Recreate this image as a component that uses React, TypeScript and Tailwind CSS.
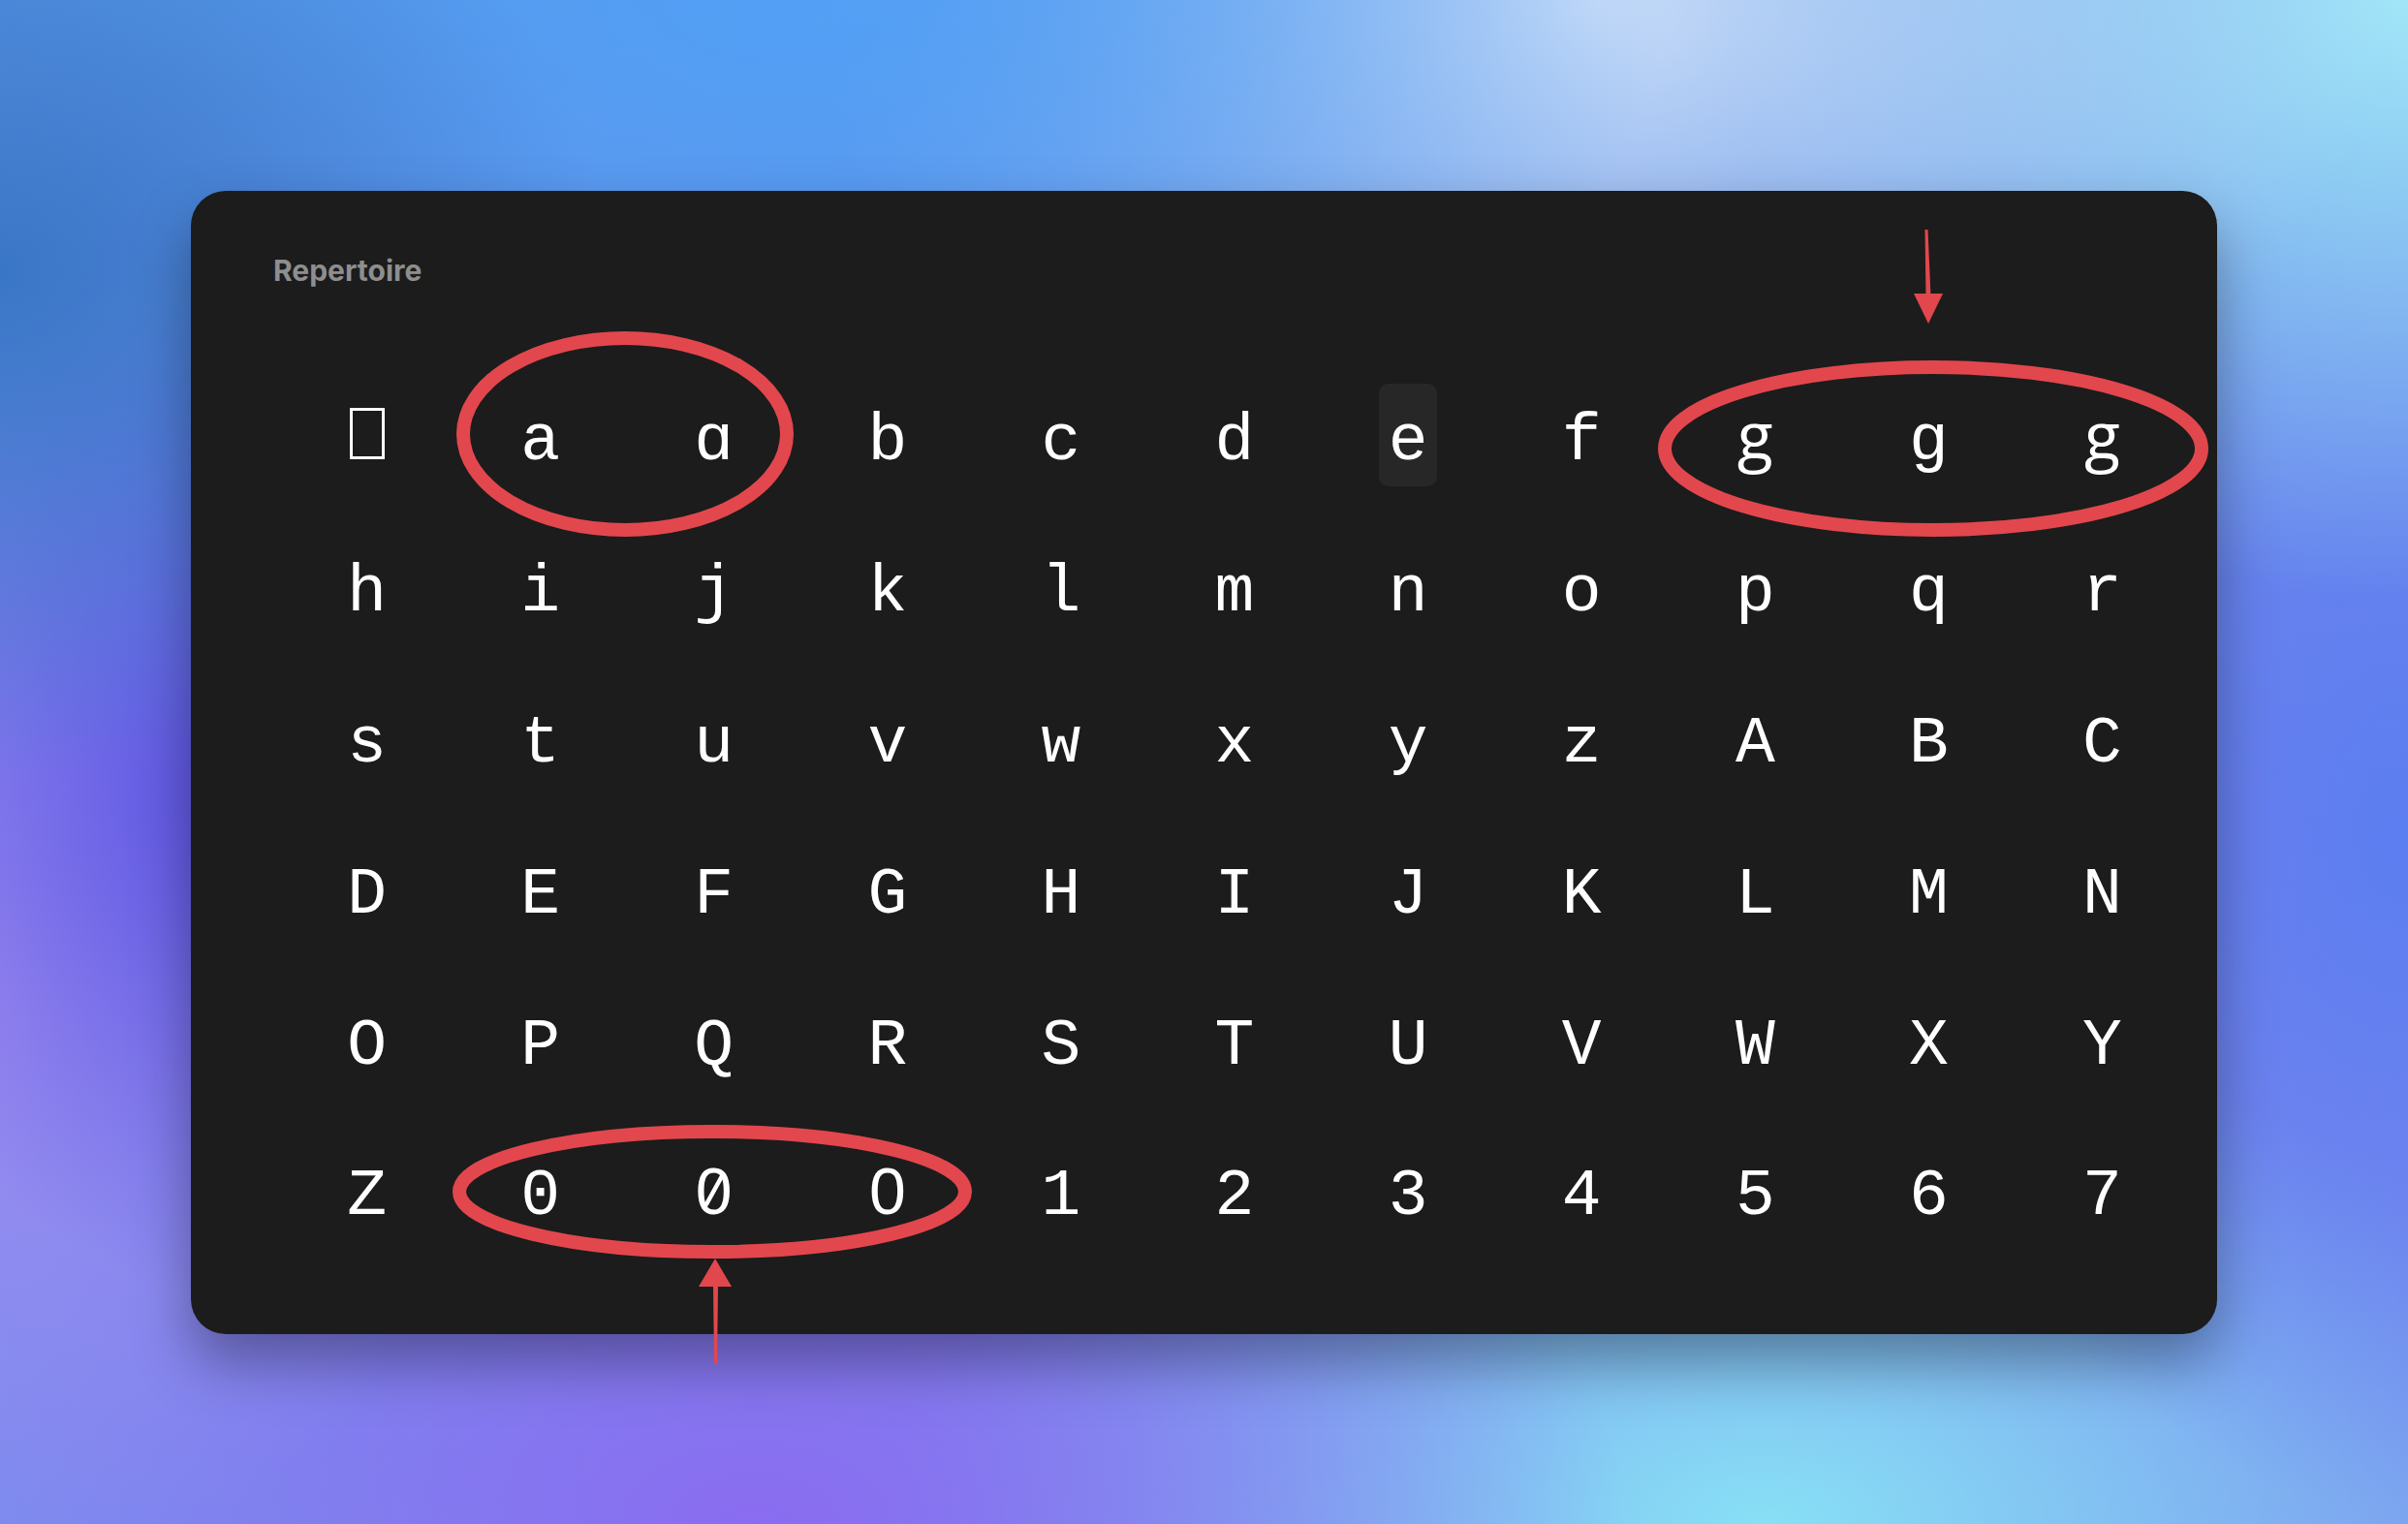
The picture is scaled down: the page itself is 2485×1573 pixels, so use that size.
import React from "react";

type Glyph = { ch: string; kind?: "tofu" | "sans" | "hl" | "slash" | "plain" };

const rows: Glyph[][] = [
  [
    { ch: "", kind: "tofu" },
    { ch: "a" },
    { ch: "\u0251" },
    { ch: "b" },
    { ch: "c" },
    { ch: "d" },
    { ch: "e", kind: "hl" },
    { ch: "f" },
    { ch: "g", kind: "sans" },
    { ch: "g" },
    { ch: "g", kind: "sans" },
  ],
  "hijklmnopqr".split("").map((ch) => ({ ch })),
  "stuvwxyzABC".split("").map((ch) => ({ ch })),
  "DEFGHIJKLMN".split("").map((ch) => ({ ch })),
  "OPQRSTUVWXY".split("").map((ch) => ({ ch })),
  [
    { ch: "Z" },
    { ch: "0" },
    { ch: "0", kind: "slash" },
    { ch: "0", kind: "plain" },
    ..."1234567".split("").map((ch) => ({ ch })),
  ],
];

const bg =
  "bg-[radial-gradient(620px_520px_at_0px_280px,#3a76c6,transparent),radial-gradient(420px_520px_at_260px_820px,#5a52e2,transparent),radial-gradient(520px_620px_at_0px_1020px,#9d8cf0,transparent),radial-gradient(900px_520px_at_820px_0px,#52a0f6,transparent),radial-gradient(820px_520px_at_1650px_0px,#c8dcf8,transparent),radial-gradient(700px_620px_at_2485px_0px,#a2e6f8,transparent),radial-gradient(520px_700px_at_2485px_860px,#5b7ef0,transparent),radial-gradient(900px_520px_at_780px_1573px,#8a6cf0,transparent),radial-gradient(900px_520px_at_1820px_1573px,#88e0f5,transparent),linear-gradient(180deg,#5a96e6,#7c80ee_55%,#7890ee)]";

function Cell({ g }: { g: Glyph }) {
  const other = g.kind === "sans" ? "font-['Open_Sans',sans-serif]" : g.kind === "slash" || g.kind === "plain" ? "font-['Liberation_Sans',sans-serif] relative" : "";
  return (
    <div className="h-[155.8px] flex items-center justify-center">
      <div
        className={`w-[60px] h-[106px] mb-[14px] rounded-[10px] text-center ${
          g.kind === "tofu" ? "pt-[25px]" : "pt-[21px]"
        } ${g.kind === "hl" ? "bg-[#272727]" : ""}`}
      >
        {g.kind === "tofu" ? (
          <div className="mx-auto w-[36px] h-[53px] border-[3px] border-white" />
        ) : (
          <div className="leading-[77px] text-[68px] text-white font-['Liberation_Mono',monospace]">
            <span className={`leading-[0] ${other}`}>
              {g.ch}
              {g.kind === "slash" && (
                <svg
                  className="absolute left-0 bottom-[14.4px]"
                  width="38"
                  height="49"
                  viewBox="0 0 38 49"
                >
                  <line x1="11" y1="39" x2="27" y2="10" stroke="white" strokeWidth="4.5" strokeLinecap="round" />
                </svg>
              )}
            </span>
          </div>
        )}
      </div>
    </div>
  );
}

export default function App() {
  return (
    <div className={`relative w-full h-screen flex items-center justify-center overflow-hidden ${bg}`}>
      <div className="w-[2091px] h-[1180px] bg-[#1c1c1c] rounded-[36px] shadow-[0_30px_60px_rgba(0,0,0,0.35)] pl-[85px] pt-[65px]">
        <p className="text-[30px] leading-[35px] font-bold text-[#8e8e8e] font-['Inter',sans-serif]">
          Repertoire
        </p>
        <div className="mt-[82px] ml-[7px] grid grid-cols-[repeat(11,179.1px)]">
          {rows.flat().map((g, i) => (
            <Cell key={i} g={g} />
          ))}
        </div>
      </div>

      {/* annotations */}
      <svg
        className="absolute inset-0 pointer-events-none"
        width="2485"
        height="1573"
        viewBox="0 0 2485 1573"
      >
        <g fill="none" stroke="#e2474d" strokeWidth="14">
          <ellipse cx="645" cy="448" rx="167" ry="99" />
          <ellipse cx="1995" cy="463" rx="277" ry="84" />
          <ellipse cx="735" cy="1230" rx="261" ry="62" />
        </g>
        <g fill="#e2474d">
          <polygon points="1986.5,237 1989.5,237 1992.5,306 1987.5,306" />
          <polygon points="1975,303 2005,303 1990,334" />
          <polygon points="736,1326 741,1326 740,1408 737,1408" />
          <polygon points="721,1328 755,1328 738,1299" />
        </g>
      </svg>
    </div>
  );
}
